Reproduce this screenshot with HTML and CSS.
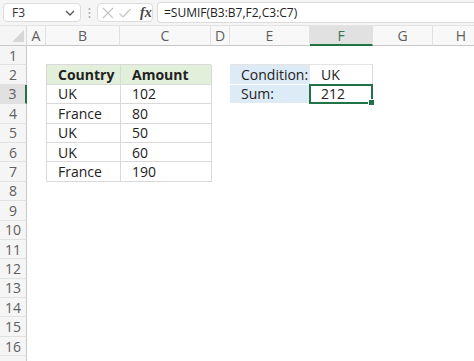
FILE: index.html
```html
<!DOCTYPE html>
<html lang="en">
<head>
    <meta charset="UTF-8">
    <meta name="viewport" content="width=device-width, initial-scale=1.0">
    <title>SUMIF example</title>
    <link rel="stylesheet" href="styles.css">
</head>
<body>
    <div class="toolbar">
        <div class="namebox">
            <span>F3</span>
            <svg class="chevron" width="10" height="6" viewBox="0 0 10 6"><path d="M1 1 L5 5 L9 1" fill="none" stroke="#555" stroke-width="1.3"/></svg>
        </div>
        <div class="grip">
            <svg width="3" height="12" viewBox="0 0 3 12"><circle cx="1.5" cy="2" r="1" fill="#aaa"/><circle cx="1.5" cy="6" r="1" fill="#aaa"/><circle cx="1.5" cy="10" r="1" fill="#aaa"/></svg>
        </div>
        <div class="fxbox">
            <svg width="14" height="14" viewBox="0 0 14 14"><path d="M2 2 L12 12 M12 2 L2 12" stroke="#c4c4c4" stroke-width="1.2"/></svg>
            <svg width="14" height="14" viewBox="0 0 14 14"><path d="M1.5 7.5 L5 11 L12.5 3" fill="none" stroke="#c4c4c4" stroke-width="1.2"/></svg>
            <span class="fx">fx</span>
        </div>
        <div class="formula">=SUMIF(B3:B7,F2,C3:C7)</div>
    </div>

    <div class="sheet">
        <div class="corner"><svg width="12" height="12" viewBox="0 0 12 12"><path d="M12 0 L12 12 L0 12 Z" fill="#d6d6d6"/></svg></div>
        <div class="colhead">A</div>
        <div class="colhead">B</div>
        <div class="colhead">C</div>
        <div class="colhead">D</div>
        <div class="colhead">E</div>
        <div class="colhead active">F</div>
        <div class="colhead">G</div>
        <div class="colhead">H</div>

        <div class="rowhead r1">1</div>
        <div class="rowhead r2">2</div>
        <div class="rowhead r3 active">3</div>
        <div class="rowhead r4">4</div>
        <div class="rowhead r5">5</div>
        <div class="rowhead r6">6</div>
        <div class="rowhead r7">7</div>
        <div class="rowhead r8">8</div>
        <div class="rowhead r9">9</div>
        <div class="rowhead r10">10</div>
        <div class="rowhead r11">11</div>
        <div class="rowhead r12">12</div>
        <div class="rowhead r13">13</div>
        <div class="rowhead r14">14</div>
        <div class="rowhead r15">15</div>
        <div class="rowhead r16">16</div>
        <div class="rowhead r17"></div>

        <div class="data">
            <div class="cell head">Country</div>
            <div class="cell head">Amount</div>
            <div class="cell">UK</div>
            <div class="cell">102</div>
            <div class="cell">France</div>
            <div class="cell">80</div>
            <div class="cell">UK</div>
            <div class="cell">50</div>
            <div class="cell">UK</div>
            <div class="cell">60</div>
            <div class="cell">France</div>
            <div class="cell">190</div>
        </div>

        <div class="criteria">
            <div class="cell label">Condition:</div>
            <div class="cell">UK</div>
            <div class="cell label">Sum:</div>
            <div class="cell selected">212</div>
        </div>
    </div>
</body>
</html>
```

FILE: styles.css
```css
body {
    margin: 0;
    font-family: "Open Sans", "Noto Sans", sans-serif;
    background-color: #ffffff;
    color: #222222;
    overflow: hidden;
}
.toolbar {
    height: 25px;
    display: flex;
    align-items: center;
    padding: 0 0 0 3px;
    background-color: #f5f5f5;
    border-bottom: 1px solid #e3e3e3;
}
.namebox {
    width: 78px;
    height: 19px;
    box-sizing: border-box;
    display: flex;
    align-items: center;
    justify-content: space-between;
    padding: 0 5px 0 8px;
    background-color: #ffffff;
    border: 1px solid #dcdcdc;
    border-radius: 4px;
    font-size: 12px;
    color: #333333;
}
.grip {
    width: 16px;
    display: flex;
    justify-content: center;
}
.fxbox {
    width: 56px;
    height: 19px;
    display: flex;
    align-items: center;
    gap: 3px;
    padding: 0 0 0 3px;
    background-color: #ffffff;
    border: 1px solid #dcdcdc;
    border-radius: 4px;
    box-sizing: border-box;
}
.fx {
    margin-left: 5px;
    font-family: "Liberation Serif", serif;
    font-style: italic;
    font-weight: bold;
    font-size: 14px;
    color: #444444;
}
.formula {
    flex: 1;
    height: 19px;
    margin-left: 4px;
    padding-left: 6px;
    display: flex;
    align-items: center;
    background-color: #ffffff;
    border: 1px solid #dcdcdc;
    border-right: none;
    border-radius: 4px 0 0 4px;
    font-size: 12px;
    color: #222222;
}
.sheet {
    display: grid;
    grid-template-columns: 27px 19px 74px 91px 19px 80px 63px 60px 57px;
    grid-template-rows: 20px repeat(17, 19.4px);
    width: 490px;
}
.corner {
    display: flex;
    align-items: flex-end;
    justify-content: flex-end;
    padding: 0 2px 3px 0;
    background-color: #f5f5f5;
    border-right: 1px solid #dadada;
    border-bottom: 1px solid #c8c8c8;
}
.colhead {
    display: flex;
    align-items: center;
    justify-content: center;
    font-size: 14px;
    color: #5e5e5e;
    background-color: #f8f8f8;
    border-right: 1px solid #e1e1e1;
    border-bottom: 1px solid #c8c8c8;
}
.colhead.active {
    background-color: #e1e1e1;
    color: #3d7656;
    border-bottom: 2px solid #217346;
}
.rowhead {
    grid-column: 1;
    display: flex;
    align-items: center;
    justify-content: center;
    font-size: 14px;
    color: #5e5e5e;
    background-color: #f5f5f5;
    border-right: 1px solid #c8c8c8;
    border-bottom: 1px solid #e1e1e1;
}
.rowhead.active {
    background-color: #e1e1e1;
    border-right: 2px solid #217346;
}
.r1 { grid-row: 2; }
.r2 { grid-row: 3; }
.r3 { grid-row: 4; }
.r4 { grid-row: 5; }
.r5 { grid-row: 6; }
.r6 { grid-row: 7; }
.r7 { grid-row: 8; }
.r8 { grid-row: 9; }
.r9 { grid-row: 10; }
.r10 { grid-row: 11; }
.r11 { grid-row: 12; }
.r12 { grid-row: 13; }
.r13 { grid-row: 14; }
.r14 { grid-row: 15; }
.r15 { grid-row: 16; }
.r16 { grid-row: 17; }
.r17 { grid-row: 18; }
.data {
    grid-column: 3 / 5;
    grid-row: 3 / 9;
    display: grid;
    grid-template-columns: 74px 91px;
    grid-auto-rows: 19.4px;
    border-top: 1px solid #d9d9d9;
    border-left: 1px solid #d9d9d9;
    margin-top: -1px;
}
.criteria {
    grid-column: 6 / 8;
    grid-row: 3 / 5;
    display: grid;
    grid-template-columns: 80px 63px;
    grid-auto-rows: 19.4px;
    border-top: 1px solid #e4e4e4;
    margin-top: -1px;
}
.cell {
    display: flex;
    align-items: center;
    padding-left: 11px;
    font-size: 14px;
    border-right: 1px solid #d9d9d9;
    border-bottom: 1px solid #d9d9d9;
}
.cell.head {
    background-color: #e2efda;
    font-weight: bold;
}
.cell.label {
    background-color: #ddebf7;
    border-right: none;
    border-bottom: 1px solid #ffffff;
}
.cell.selected {
    position: relative;
    border: 2px solid #217346;
    margin: -1px 0 0 -1px;
    padding-left: 10px;
}
.cell.selected::after {
    content: "";
    position: absolute;
    right: -4px;
    bottom: -4px;
    width: 5px;
    height: 5px;
    background-color: #217346;
    border: 1px solid #ffffff;
}
```
